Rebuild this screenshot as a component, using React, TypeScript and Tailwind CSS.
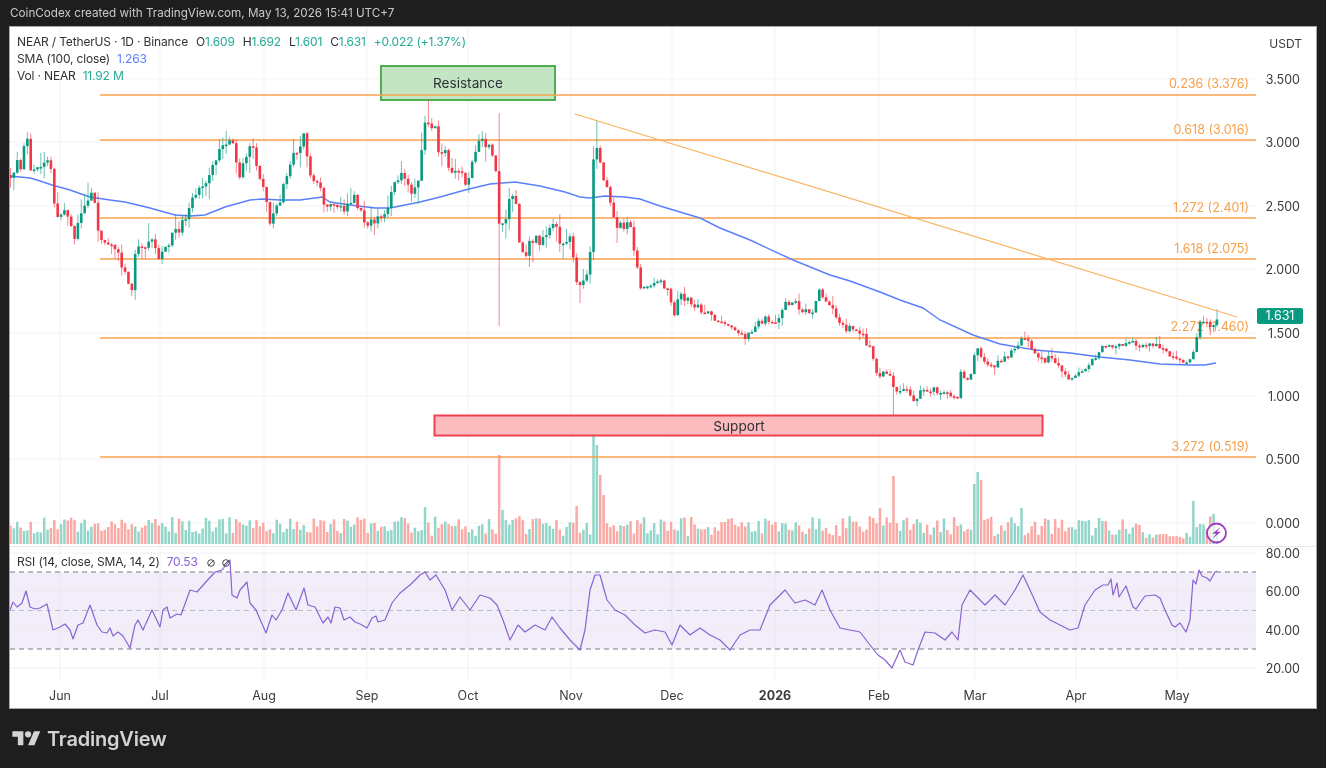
const FONT = "font-['Inter','Noto_Sans',sans-serif]";

const closes = [[10,175],[13,172],[16,160],[22,168],[26,131],[30,168],[38,170],[45,165],[50,160],[53,175],[55,215],[60,215],[65,212],[75,235],[85,203],[92,190],[97,222],[100,245],[110,240],[117,250],[124,270],[130,282],[133,288],[135,255],[150,240],[160,260],[170,240],[185,220],[190,205],[205,180],[215,165],[224,140],[232,140],[240,175],[248,150],[252,142],[258,170],[265,190],[270,220],[280,200],[290,160],[305,135],[310,175],[320,180],[325,215],[335,200],[345,215],[352,195],[367,225],[380,220],[390,200],[396,180],[405,175],[410,190],[418,185],[424,120],[428,125],[435,125],[440,160],[445,150],[452,177],[460,170],[465,183],[470,170],[478,140],[488,145],[495,155],[498,225],[505,230],[510,190],[515,195],[520,250],[525,255],[530,240],[540,240],[550,225],[555,222],[562,250],[570,240],[578,290],[585,280],[590,255],[592,172],[596,148],[601,170],[607,190],[615,225],[625,225],[630,222],[636,258],[640,290],[650,285],[660,280],[670,295],[673,317],[680,295],[690,300],[700,310],[710,315],[720,320],[730,330],[745,338],[755,325],[765,320],[775,322],[785,305],[795,298],[800,310],[815,310],[817,285],[825,300],[832,303],[835,320],[845,328],[860,332],[870,350],[877,375],[885,372],[890,378],[895,395],[905,390],[915,400],[922,390],[935,390],[945,393],[957,400],[960,375],[970,377],[975,350],[978,345],[985,365],[995,368],[1005,355],[1015,352],[1022,335],[1030,345],[1040,360],[1050,358],[1060,370],[1070,377],[1080,370],[1090,362],[1097,355],[1105,345],[1120,345],[1130,343],[1140,345],[1150,345],[1160,347],[1170,355],[1180,360],[1187,362],[1192,358],[1197,335],[1200,320],[1205,322],[1212,325],[1216,318]];

const smaPts = [[10,176],[30,178],[37,180],[52,185],[70,190],[90,197],[110,200],[125,202],[150,208],[175,215],[190,216],[205,215],[225,207],[250,200],[262,199],[280,200],[300,200],[322,197],[330,202],[350,205],[375,208],[390,208],[420,202],[440,197],[465,190],[490,184],[515,182],[540,186],[565,192],[580,197],[590,198],[605,196],[625,197],[640,199],[660,206],[680,212],[700,218],[720,228],[750,240],[793,260],[830,275],[850,281],[880,292],[900,300],[923,308],[940,320],[973,335],[1000,344],[1035,350],[1070,353],[1100,357],[1130,360],[1160,364],[1190,365],[1205,365],[1216,363]];

const rsiPts = [[10,610],[13,602],[17,607],[22,603],[26,591],[30,607],[35,609],[40,608],[47,604],[53,630],[60,627],[65,624],[70,630],[73,639],[78,625],[83,623],[90,605],[97,625],[102,632],[107,633],[110,628],[113,636],[118,632],[123,636],[130,648],[135,625],[138,620],[143,630],[152,610],[160,627],[163,610],[167,607],[170,618],[177,614],[181,615],[190,590],[197,592],[205,583],[215,572],[222,570],[230,560],[232,595],[237,598],[240,590],[247,582],[250,603],[256,610],[266,633],[272,615],[276,620],[282,610],[288,593],[296,610],[304,588],[308,605],[315,607],[323,623],[328,617],[331,623],[335,607],[340,608],[344,620],[350,617],[355,622],[360,624],[367,628],[372,618],[376,616],[378,622],[385,620],[392,603],[400,593],[410,585],[420,575],[425,572],[430,580],[436,575],[445,590],[452,610],[460,597],[470,610],[480,595],[490,598],[497,605],[503,620],[510,640],[518,625],[525,632],[535,625],[545,630],[552,617],[560,628],[570,640],[580,650],[585,630],[590,590],[595,575],[600,575],[607,600],[615,610],[625,615],[635,625],[645,633],[655,630],[665,632],[672,645],[680,625],[690,635],[700,628],[710,635],[720,640],[730,650],[740,635],[750,630],[760,630],[770,605],[785,590],[795,603],[805,600],[815,605],[822,590],[830,610],[840,628],[850,630],[860,632],[870,645],[878,655],[885,660],[892,668],[900,650],[905,662],[913,665],[918,650],[925,632],[935,633],[945,640],[952,632],[958,640],[962,605],[970,590],[978,598],[985,605],[995,595],[1005,605],[1015,590],[1023,575],[1030,590],[1040,612],[1050,620],[1060,625],[1070,630],[1078,628],[1085,605],[1095,590],[1103,585],[1108,585],[1111,579],[1113,595],[1117,583],[1119,597],[1126,586],[1133,607],[1136,609],[1145,596],[1155,595],[1160,598],[1165,610],[1172,625],[1175,627],[1180,623],[1186,632],[1190,620],[1193,580],[1196,584],[1199,570],[1202,576],[1207,578],[1210,581],[1215,572],[1217,571]];

const months = [
  { x: 60, label: "Jun" }, { x: 160, label: "Jul" }, { x: 264, label: "Aug" }, { x: 367, label: "Sep" },
  { x: 468, label: "Oct" }, { x: 571, label: "Nov" }, { x: 672, label: "Dec" }, { x: 775, label: "2026", bold: true },
  { x: 879, label: "Feb" }, { x: 975, label: "Mar" }, { x: 1076, label: "Apr" }, { x: 1177, label: "May" },
];

const fibs = [
  { y: 95, label: "0.236 (3.376)", ty: 83 },
  { y: 140, label: "0.618 (3.016)", ty: 129 },
  { y: 218, label: "1.272 (2.401)", ty: 207 },
  { y: 259, label: "1.618 (2.075)", ty: 248 },
  { y: 338, label: "2.272 (1.460)", ty: 326 },
  { y: 457, label: "3.272 (0.519)", ty: 446 },
];

const priceLabels = [
  { y: 79, t: "3.500" }, { y: 142, t: "3.000" }, { y: 206, t: "2.500" }, { y: 269, t: "2.000" }, { y: 333, t: "1.500" },
  { y: 396, t: "1.000" }, { y: 459, t: "0.500" }, { y: 523, t: "0.000" },
  { y: 553, t: "80.00" }, { y: 591, t: "60.00" }, { y: 630, t: "40.00" }, { y: 668, t: "20.00" },
];

// seeded so every render draws the same candles
function makeRand(seed: number) {
  let s = seed;
  return () => {
    s = (s + 0x6d2b79f5) | 0;
    let t = Math.imul(s ^ (s >>> 15), 1 | s);
    t = (t + Math.imul(t ^ (t >>> 7), 61 | t)) ^ t;
    return ((t ^ (t >>> 14)) >>> 0) / 4294967296;
  };
}

function lerp(pts: number[][], x: number) {
  for (let i = 1; i < pts.length; i++) {
    if (x <= pts[i][0]) {
      const [x0, y0] = pts[i - 1];
      const [x1, y1] = pts[i];
      return y0 + ((y1 - y0) * (x - x0)) / (x1 - x0);
    }
  }
  return pts[pts.length - 1][1];
}

const wickOverrides: { x: number; top?: number; bottom?: number }[] = [
  { x: 498, top: 113, bottom: 326 },
  { x: 596, top: 120 },
  { x: 592, top: 146 },
  { x: 428, top: 100 },
  { x: 895, bottom: 416 },
  { x: 1216, top: 309 },
  { x: 131, bottom: 296 },
];

const volSpikes: { x: number; top: number }[] = [
  { x: 498, top: 455 }, { x: 502, top: 510 }, { x: 425, top: 507 }, { x: 592, top: 415 }, { x: 596, top: 445 },
  { x: 600, top: 475 }, { x: 604, top: 495 }, { x: 578, top: 506 }, { x: 893, top: 476 }, { x: 881, top: 508 },
  { x: 974, top: 484 }, { x: 977, top: 472 }, { x: 981, top: 480 }, { x: 1023, top: 508 }, { x: 1099, top: 518 },
  { x: 1193, top: 501 }, { x: 1199, top: 524 }, { x: 1213, top: 514 },
];

function buildCandles() {
  const rand = makeRand(41);
  const out = [];
  const step = 3.37;
  let prev = 175;
  for (let x = 10.5; x <= 1217; x += step) {
    const wild = x < 640;
    const amp = x > 1100 && x < 1190 ? 2.6 : wild ? 5 : 3.6;
    const close = lerp(closes, x) + (rand() - 0.5) * amp * 2;
    const open = prev;
    const wickAmp = wild ? 13 : 6.5;
    let top = Math.min(open, close) - rand() * rand() * wickAmp * 1.6;
    let bottom = Math.max(open, close) + rand() * rand() * wickAmp * 1.6;
    for (const w of wickOverrides) {
      if (Math.abs(w.x - x) <= step / 2) {
        if (w.top) top = w.top;
        if (w.bottom) bottom = w.bottom;
      }
    }
    const base = x > 1140 && x < 1190 ? 5 + rand() * 8 : x < 420 ? 10 + rand() * 17 : 8 + rand() * 20;
    let volTop = 544 - base;
    for (const v of volSpikes) {
      if (Math.abs(v.x - x) <= step / 2) volTop = v.top;
    }
    out.push({ x, open, close, top, bottom, up: close < open, volTop });
    prev = close;
  }
  return out;
}

const candles = buildCandles();
const toPath = (pts: number[][]) => pts.map((p) => p.join(",")).join(" ");
const GREEN = "#089981";
const RED = "#f23645";

function MainPane() {
  return (
    <svg viewBox="10 27 1246 519" className="h-[519px] w-[1246px] shrink-0">
      {months.map((m) => (
        <line key={m.x} x1={m.x} x2={m.x} y1={27} y2={546} stroke="#f3f3f5" strokeWidth="1" />
      ))}
      {[79, 142, 206, 269, 333, 396, 459, 523].map((y) => (
        <line key={y} x1={10} x2={1256} y1={y} y2={y} stroke="#f3f3f5" strokeWidth="1" />
      ))}
      {candles.map((c) => (
        <rect key={c.x} x={c.x - 1.25} y={c.volTop} width={2.5} height={544 - c.volTop} fill={c.up ? "#92d5c9" : "#faa9a5"} />
      ))}
      <rect x="381" y="66" width="174" height="34" fill="#c3e5c4" stroke="#4fae52" strokeWidth="2" />
      <text x="468" y="88" textAnchor="middle" fontSize="13.6" fill="#2f3136">Resistance</text>
      {fibs.map((f) => (
        <text key={f.y} x="1249" y={f.ty + 4.5} textAnchor="end" fontSize="12.5" fill="#f7a04b">{f.label}</text>
      ))}
      {fibs.map((f) => (
        <line key={f.y} x1={100} x2={1256} y1={f.y} y2={f.y} stroke="#f9a24e" strokeWidth="1.4" />
      ))}
      <polyline points={toPath(smaPts)} fill="none" stroke="#5a7ffa" strokeWidth="1.4" />
      {candles.map((c) => {
        const col = c.up ? GREEN : RED;
        return (
          <g key={c.x}>
            <line x1={c.x} x2={c.x} y1={c.top} y2={c.bottom} stroke={col} strokeOpacity="0.6" strokeWidth="1" />
            <rect x={c.x - 1.3} y={Math.min(c.open, c.close)} width={2.6} height={Math.max(1.6, Math.abs(c.open - c.close))} fill={col} />
          </g>
        );
      })}
      <line x1="575" y1="114" x2="1237" y2="317" stroke="#fbb263" strokeWidth="1.2" />
      <rect x="434.5" y="415.5" width="608" height="20" fill="#fcbcbe" stroke="#f0414f" strokeWidth="2" />
      <text x="739" y="431" textAnchor="middle" fontSize="13.6" fill="#2f3136">Support</text>
      <circle cx="1216.5" cy="533" r="9.5" fill="#ffffff" fillOpacity="0.7" stroke="#9c3cc0" strokeWidth="1.8" />
      <path d="M1220.5 527l-8.2 6.8h4l-3.8 5 8.4-7h-4z" fill="#9c3cc0" />
    </svg>
  );
}

function RsiPane() {
  return (
    <svg viewBox="10 547 1246 134" className="h-[134px] w-[1246px] shrink-0">
      {months.map((m) => (
        <line key={m.x} x1={m.x} x2={m.x} y1={547} y2={681} stroke="#f3f3f5" strokeWidth="1" />
      ))}
      <rect x="10" y="572" width="1246" height="77" fill="#7e57c2" fillOpacity="0.1" />
      {[553, 591, 630, 668].map((y) => (
        <line key={y} x1={10} x2={1256} y1={y} y2={y} stroke="#e9e7f0" strokeOpacity="0.7" strokeWidth="1" />
      ))}
      <line x1="10" x2="1256" y1="572" y2="572" stroke="#787b86" strokeWidth="1" strokeDasharray="5 4" />
      <line x1="10" x2="1256" y1="610.5" y2="610.5" stroke="#787b86" strokeOpacity="0.45" strokeWidth="1" strokeDasharray="5 4" />
      <line x1="10" x2="1256" y1="649" y2="649" stroke="#787b86" strokeWidth="1" strokeDasharray="5 4" />
      <polyline points={toPath(rsiPts)} fill="none" stroke="#8a63d2" strokeWidth="1.2" strokeLinejoin="round" />
      {[211, 226].map((x) => (
        <g key={x} fill="none" stroke="#4a4c55" strokeWidth="1">
          <circle cx={x} cy="563" r="3.3" />
          <line x1={x - 3} y1={566} x2={x + 3} y2={560} />
        </g>
      ))}
    </svg>
  );
}

function Legend() {
  const green = "text-[#22ab94]";
  return (
    <div className="absolute left-[7px] top-[8px] flex flex-col gap-[3px] text-[12px] leading-[14px] tracking-[-0.16px] text-[#2f3136]">
      <div className="flex gap-[8px]">
        <span>NEAR / TetherUS · 1D · Binance</span>
        <span>O<span className={green}>1.609</span></span>
        <span>H<span className={green}>1.692</span></span>
        <span>L<span className={green}>1.601</span></span>
        <span>C<span className={green}>1.631</span></span>
        <span className={green}>+0.022 (+1.37%)</span>
      </div>
      <div className="flex gap-[7px]">
        <span>SMA (100, close)</span>
        <span className="text-[#5b7ffb]">1.263</span>
      </div>
      <div className="flex gap-[7px]">
        <span>Vol · NEAR</span>
        <span className={green}>11.92 M</span>
      </div>
    </div>
  );
}

function PriceScale() {
  return (
    <div className="relative w-[60px] text-[12.5px] text-[#3a3c42]">
      <span className="absolute right-[14px] top-[10px] text-[12px] leading-[14px]">USDT</span>
      {priceLabels.map((p) => (
        <span key={p.t} className="absolute right-[16px] leading-[14px]" style={{ top: p.y - 26 - 7 }}>
          {p.t}
        </span>
      ))}
      <span className="absolute top-[519px] h-px w-full bg-[#e8e8ea]" />
      <span className="absolute left-[1px] top-[281px] flex h-[16px] w-[46px] items-center justify-center rounded-[2px] bg-[#089981] text-[12.5px] text-white">
        1.631
      </span>
    </div>
  );
}

export default function App() {
  return (
    <div className={`flex h-screen w-full flex-col overflow-hidden bg-[#1e1e1e] blur-[0.35px] ${FONT}`}>
      <div className="flex h-[27px] shrink-0 items-center pl-[10px] text-[11.7px] text-[#c9c9c9]">
        CoinCodex created with TradingView.com, May 13, 2026 15:41 UTC+7
      </div>
      <div className="relative mx-[10px] flex h-[681px] shrink-0 flex-col bg-white shadow-[0_0_0_1px_#a8a8a8]">
        <Legend />
        <div className="absolute left-[7px] top-[528px] flex gap-[7px] text-[12px] leading-[14px] tracking-[-0.16px] text-[#2f3136]">
          <span>RSI (14, close, SMA, 14, 2)</span>
          <span className="text-[#8a63d2]">70.53</span>
        </div>
        <div className="flex flex-1">
          <div className="flex flex-col">
            <MainPane />
            <div className="h-px w-[1246px] bg-[#e8e8ea]" />
            <RsiPane />
          </div>
          <PriceScale />
        </div>
        <div className="relative h-[27px] shrink-0 text-[12.5px] text-[#3a3c42]">
          {months.map((m) => (
            <span
              key={m.x}
              className={`absolute top-[8px] -translate-x-1/2 leading-[14px] ${m.bold ? "font-bold" : ""}`}
              style={{ left: m.x - 10 }}
            >
              {m.label}
            </span>
          ))}
        </div>
      </div>
      <div className="flex flex-1 items-center gap-[6px] pl-[12px] pt-[1px] text-[#d3d3d3]">
        <svg viewBox="0 0 36 28" className="h-[22px] w-[29px]" fill="currentColor">
          <path d="M14 22H7V11H0V4h14v18zM28 22h-8l7.5-18h8L28 22z" />
          <circle cx="20" cy="8" r="4" />
        </svg>
        <span className="text-[20px] font-semibold leading-none tracking-[-0.2px]">TradingView</span>
      </div>
    </div>
  );
}
